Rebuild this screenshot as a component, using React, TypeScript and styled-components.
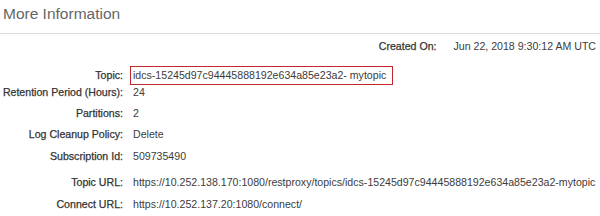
import styled, { createGlobalStyle } from "styled-components"

const GlobalStyle = createGlobalStyle`
  body {
    margin: 0;
    background: #fff;
    font-family: "Liberation Sans", Arial, sans-serif;
    font-size: 10.6px;
    line-height: 13px;
    color: #333;
  }
`

interface FieldProps {
  space: number;
}

const fields = [
  { label: 'Retention Period (Hours):', value: '24', space: 1 },
  { label: 'Partitions:', value: '2', space: 8 },
  { label: 'Log Cleanup Policy:', value: 'Delete', space: 8 },
  { label: 'Subscription Id:', value: '509735490', space: 9 },
  { label: 'Topic URL:', value: 'https://10.252.138.170:1080/restproxy/topics/idcs-15245d97c94445888192e634a85e23a2-mytopic', space: 13 },
  { label: 'Connect URL:', value: 'https://10.252.137.20:1080/connect/', space: 9 },
]

const Panel = styled.div`
  width: 600px;
  height: 216px;
  overflow: hidden;
`

const Header = styled.div`
  padding: 5px 0 10px 3px;
  border-bottom: 1px solid #dcdcdc;
`

const Title = styled.h2`
  margin: 0;
  font-size: 15.5px;
  line-height: 18px;
  font-weight: normal;
  color: #666;
`

const CreatedRow = styled.div`
  display: flex;
  justify-content: flex-end;
  gap: 17px;
  margin-top: 6px;
  padding-right: 4px;
`

const Field = styled.div<FieldProps>`
  display: grid;
  grid-template-columns: 123px 1fr;
  column-gap: 10px;
  align-items: center;
  margin-top: ${props => props.space}px;
  white-space: nowrap;
`

const Label = styled.span`
  text-align: right;
  color: #333;
  -webkit-text-stroke: 0.25px #333;
`

const Value = styled.span`
  color: #3c3c3c;
`

const Highlight = styled.span`
  justify-self: start;
  margin-left: -3px;
  padding: 2px 6px 2px 2px;
  border: 1px solid #c1272d;
  color: #3c3c3c;
`

export default function App() {
  return <Panel>
    <GlobalStyle />
    <Header>
      <Title>More Information</Title>
    </Header>
    <CreatedRow>
      <Label>Created On:</Label>
      <Value>Jun 22, 2018 9:30:12 AM UTC</Value>
    </CreatedRow>
    <Field space={13}>
      <Label>Topic:</Label>
      <Highlight>idcs-15245d97c94445888192e634a85e23a2- mytopic</Highlight>
    </Field>
    {
      fields.map((f, i) => (
        <Field key={i} space={f.space}>
          <Label>{f.label}</Label>
          <Value>{f.value}</Value>
        </Field>
      ))
    }
  </Panel>
}
